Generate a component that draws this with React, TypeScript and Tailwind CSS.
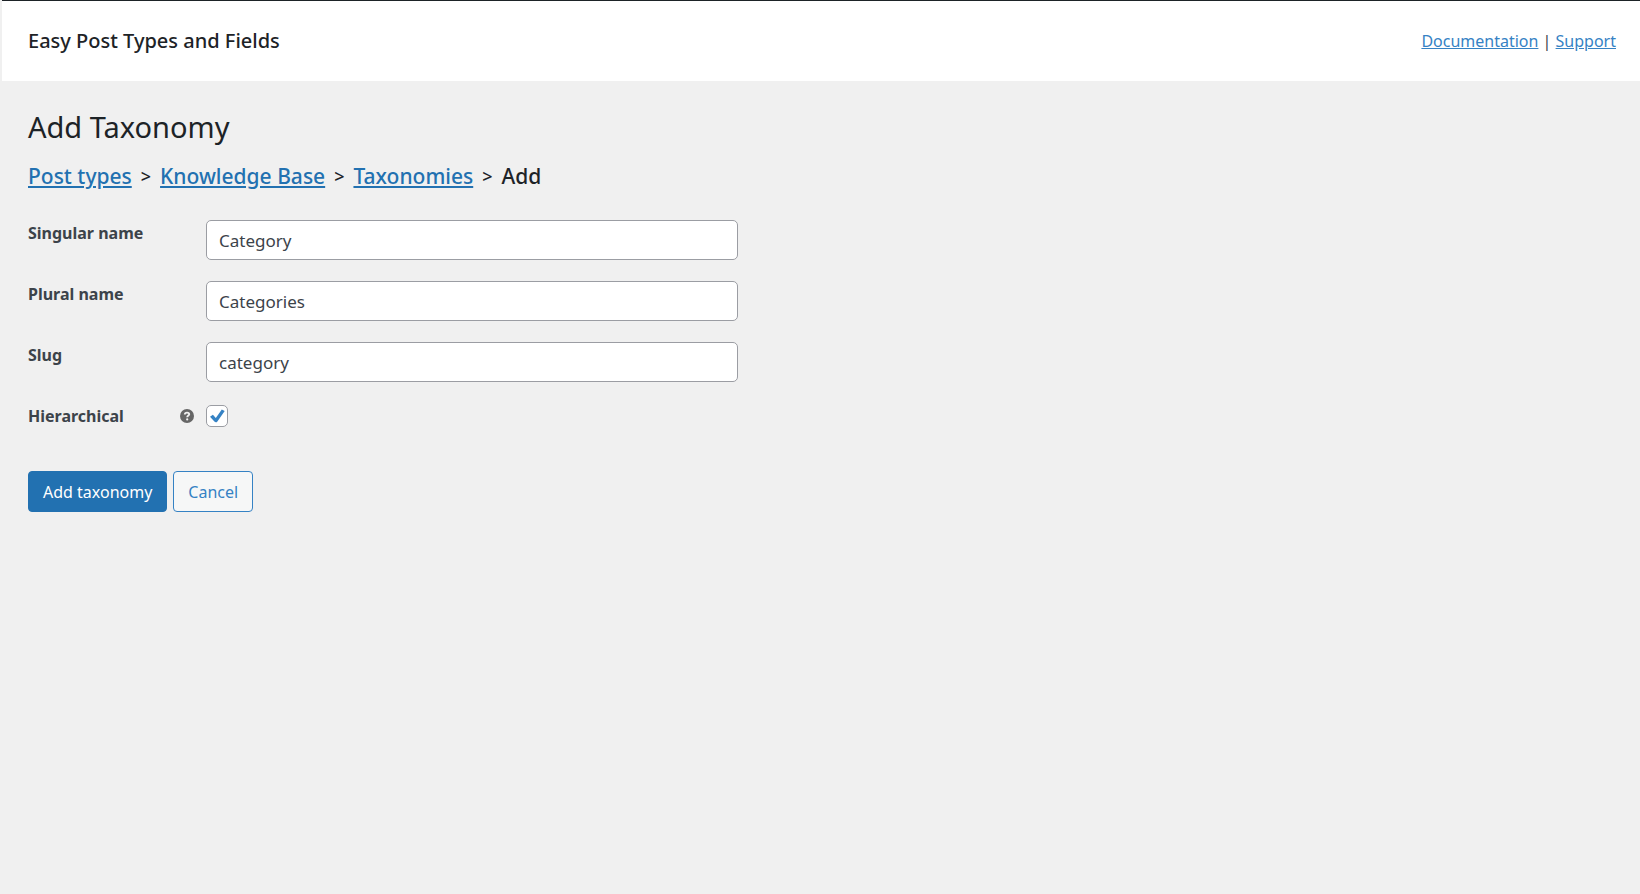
import { useState } from "react";

const crumbs = ["Post types", "Knowledge Base", "Taxonomies"];

const fields = [
  { id: "singular", label: "Singular name", value: "Category" },
  { id: "plural", label: "Plural name", value: "Categories" },
  { id: "slug", label: "Slug", value: "category" },
];

function HelpIcon() {
  return (
    <svg viewBox="0 0 14 14" className="h-3.5 w-3.5" role="img" aria-label="Help">
      <circle cx="7" cy="7" r="7" fill="#666" />
      <path d="M4.800 5.500C4.900 4.200 5.800 3.600 7 3.600s2.200.6 2.200 1.700C9.200 6.500 7.200 6.600 7.200 8.300" fill="none" stroke="#f0f0f0" strokeWidth="1.9" />
      <circle cx="7.200" cy="10.400" r="1.100" fill="#f0f0f0" />
    </svg>
  );
}

export default function App() {
  const [values, setValues] = useState(fields.map((f) => f.value));
  const [hierarchical, setHierarchical] = useState(true);

  return (
    <div className="min-h-screen bg-[#f0f0f0] font-['Noto_Sans','Open_Sans',sans-serif] text-base text-[#3c434a]">
      {/* HEADER */}
      <header className="ml-0.5 flex h-[81px] items-center justify-between border-t border-[#1d2327] bg-white pl-[26px] pr-6">
        <h1 className="text-xl font-medium text-[#1d2327]">Easy Post Types and Fields</h1>
        <div>
          <a href="#docs" className="text-[#3582c4] underline">Documentation</a>
          {" | "}
          <a href="#support" className="text-[#3582c4] underline">Support</a>
        </div>
      </header>

      <main className="px-7 pt-7">
        <h2 className="text-[29px] leading-9 text-[#1d2327]">Add Taxonomy</h2>

        {/* BREADCRUMBS */}
        <nav className="mt-[15px] flex items-center gap-[9px] text-[21px] font-medium leading-8 text-[#1d2327]">
          {crumbs.map((crumb) => (
            <span key={crumb} className="flex items-center gap-[9px]">
              <a href="#crumb" className="text-[#2271b1] underline">{crumb}</a>
              <span className="text-lg">&gt;</span>
            </span>
          ))}
          <span>Add</span>
        </nav>

        {/* FORM */}
        <form className="mt-7" onSubmit={(e) => e.preventDefault()}>
          <div className="space-y-[21px]">
            {fields.map((field, i) => (
              <div key={field.id} className="flex items-start">
                <label htmlFor={field.id} className="w-[178px] shrink-0 pt-px font-bold leading-6">
                  {field.label}
                </label>
                <input
                  id={field.id}
                  type="text"
                  value={values[i]}
                  onChange={(e) => setValues(values.map((v, n) => (n === i ? e.target.value : v)))}
                  className="h-10 w-full max-w-[532px] rounded-[5px] border border-[#9b9da3] bg-white px-3 text-[17px] text-[#3c434a]"
                />
              </div>
            ))}
          </div>

          <div className="mt-[22px] flex h-6 items-center">
            <label htmlFor="hierarchical" className="w-[152px] font-bold">Hierarchical</label>
            <HelpIcon />
            <span className="relative ml-3 h-[22px] w-[22px]">
              <input
                id="hierarchical"
                type="checkbox"
                checked={hierarchical}
                onChange={(e) => setHierarchical(e.target.checked)}
                className="block h-[22px] w-[22px] appearance-none rounded-[5px] border border-[#9b9da3] bg-white"
              />
              {hierarchical && (
                <svg viewBox="0 0 22 22" className="pointer-events-none absolute inset-0">
                  <path d="M4 11.800 6.900 9.800l2.900 3.100 6-8.300 2.900 1.300-7.300 10.500c-.8 1.200-2.200 1.200-3 .1z" fill="#3582c4" />
                </svg>
              )}
            </span>
          </div>

          <div className="mt-[43px] flex gap-1.5">
            <button type="submit" className="h-[41px] rounded border border-[#2271b1] bg-[#2271b1] px-3.5 text-white">
              Add taxonomy
            </button>
            <button type="button" className="h-[41px] rounded border border-[#3582c4] bg-[#f6f7f7] px-3.5 text-[#3582c4]">
              Cancel
            </button>
          </div>
        </form>
      </main>
    </div>
  );
}
